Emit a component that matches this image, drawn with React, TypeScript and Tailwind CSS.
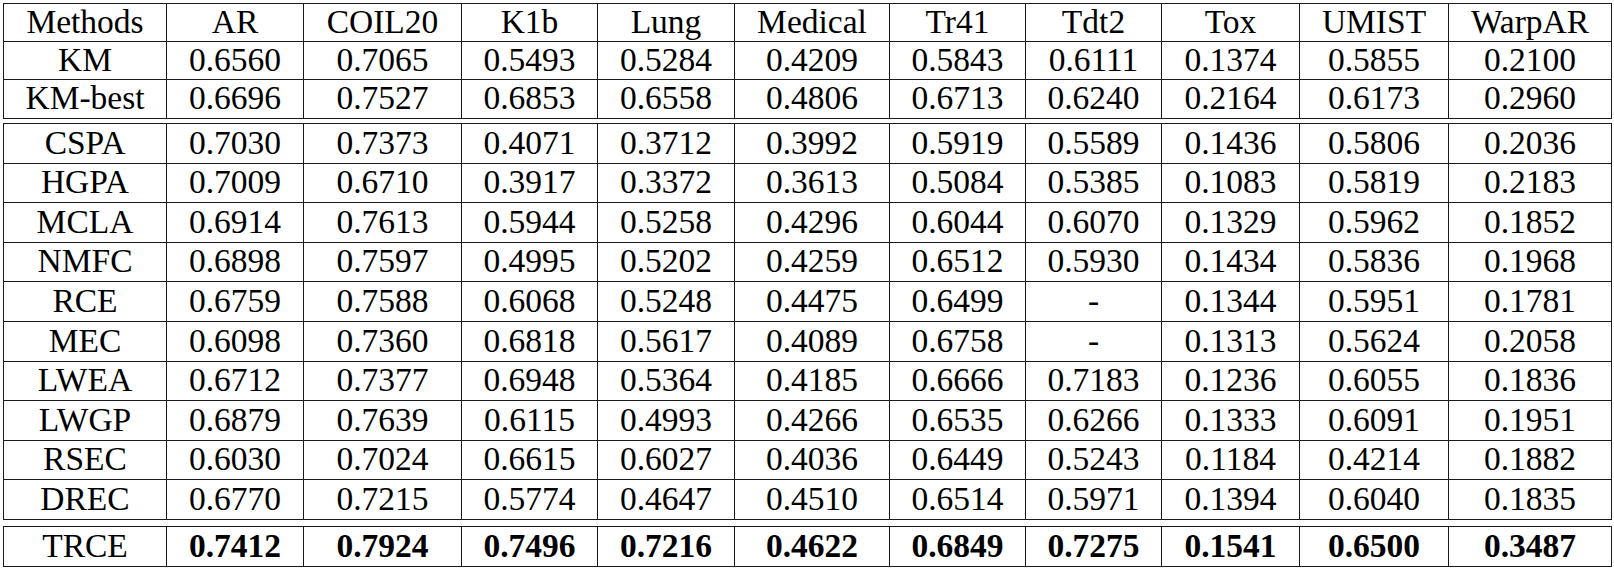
import React from 'react';

type Row = { name: string; values: string[] };

const headers = ['Methods', 'AR', 'COIL20', 'K1b', 'Lung', 'Medical', 'Tr41', 'Tdt2', 'Tox', 'UMIST', 'WarpAR'];

const baselines: Row[] = [
  { name: 'KM', values: ['0.6560', '0.7065', '0.5493', '0.5284', '0.4209', '0.5843', '0.6111', '0.1374', '0.5855', '0.2100'] },
  { name: 'KM-best', values: ['0.6696', '0.7527', '0.6853', '0.6558', '0.4806', '0.6713', '0.6240', '0.2164', '0.6173', '0.2960'] },
];

const ensembles: Row[] = [
  { name: 'CSPA', values: ['0.7030', '0.7373', '0.4071', '0.3712', '0.3992', '0.5919', '0.5589', '0.1436', '0.5806', '0.2036'] },
  { name: 'HGPA', values: ['0.7009', '0.6710', '0.3917', '0.3372', '0.3613', '0.5084', '0.5385', '0.1083', '0.5819', '0.2183'] },
  { name: 'MCLA', values: ['0.6914', '0.7613', '0.5944', '0.5258', '0.4296', '0.6044', '0.6070', '0.1329', '0.5962', '0.1852'] },
  { name: 'NMFC', values: ['0.6898', '0.7597', '0.4995', '0.5202', '0.4259', '0.6512', '0.5930', '0.1434', '0.5836', '0.1968'] },
  { name: 'RCE', values: ['0.6759', '0.7588', '0.6068', '0.5248', '0.4475', '0.6499', '-', '0.1344', '0.5951', '0.1781'] },
  { name: 'MEC', values: ['0.6098', '0.7360', '0.6818', '0.5617', '0.4089', '0.6758', '-', '0.1313', '0.5624', '0.2058'] },
  { name: 'LWEA', values: ['0.6712', '0.7377', '0.6948', '0.5364', '0.4185', '0.6666', '0.7183', '0.1236', '0.6055', '0.1836'] },
  { name: 'LWGP', values: ['0.6879', '0.7639', '0.6115', '0.4993', '0.4266', '0.6535', '0.6266', '0.1333', '0.6091', '0.1951'] },
  { name: 'RSEC', values: ['0.6030', '0.7024', '0.6615', '0.6027', '0.4036', '0.6449', '0.5243', '0.1184', '0.4214', '0.1882'] },
  { name: 'DREC', values: ['0.6770', '0.7215', '0.5774', '0.4647', '0.4510', '0.6514', '0.5971', '0.1394', '0.6040', '0.1835'] },
];

const ours: Row = {
  name: 'TRCE',
  values: ['0.7412', '0.7924', '0.7496', '0.7216', '0.4622', '0.6849', '0.7275', '0.1541', '0.6500', '0.3487'],
};

// column widths measured off the figure (each includes its right rule)
const gridCols = 'grid grid-cols-[163px_137px_158px_136px_137px_155px_136px_136px_138px_149px_163px]';

const Cell: React.FC<{ children: React.ReactNode; h: string; bold?: boolean }> = ({ children, h, bold }) => (
  <div
    className={`${h} flex items-center justify-center border-r border-b border-[#1a1a1a] pb-[2px] ${
      bold ? 'font-bold' : ''
    }`}
  >
    {children}
  </div>
);

export default function App() {
  return (
    <div
      className="min-h-screen bg-white pl-[3px] pt-[3px] text-black text-[33.5px] leading-none"
      style={{ fontFamily: '"Liberation Serif", "Times New Roman", serif' }}
    >
      <div className="w-[1609px]">
        {/* header + KM baselines */}
        <div className={`${gridCols} border-l border-t border-[#1a1a1a]`}>
          {headers.map((h) => (
            <Cell key={h} h="h-[38px]">{h}</Cell>
          ))}
          {baselines.map((row, i) => (
            <React.Fragment key={row.name}>
              <Cell h={i === 0 ? 'h-[38px]' : 'h-[39px]'}>{row.name}</Cell>
              {row.values.map((v, j) => (
                <Cell key={j} h={i === 0 ? 'h-[38px]' : 'h-[39px]'}>{v}</Cell>
              ))}
            </React.Fragment>
          ))}
        </div>

        {/* ensemble methods */}
        <div className={`${gridCols} mt-[4px] border-l border-t border-[#1a1a1a]`}>
          {ensembles.map((row) => (
            <React.Fragment key={row.name}>
              <Cell h="h-[39.6px]">{row.name}</Cell>
              {row.values.map((v, j) => (
                <Cell key={j} h="h-[39.6px]">{v}</Cell>
              ))}
            </React.Fragment>
          ))}
        </div>

        {/* proposed */}
        <div className={`${gridCols} mt-[6px] border-l border-t border-[#1a1a1a]`}>
          <Cell h="h-[40px]">{ours.name}</Cell>
          {ours.values.map((v, j) => (
            <Cell key={j} h="h-[40px]" bold>
              {v}
            </Cell>
          ))}
        </div>
      </div>
    </div>
  );
}
